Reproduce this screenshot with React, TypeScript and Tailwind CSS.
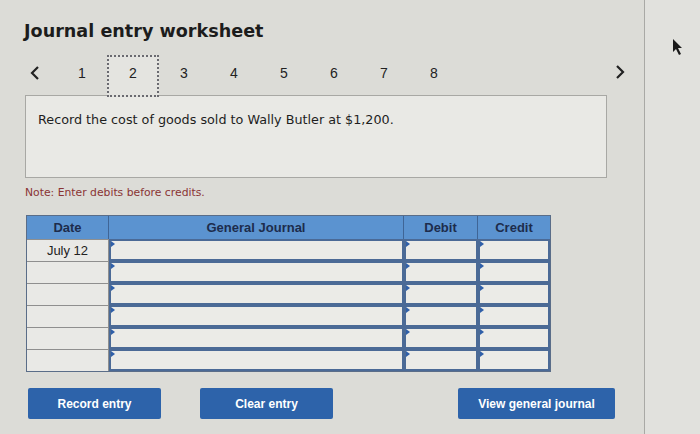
import React from 'react';

const steps = [1, 2, 3, 4, 5, 6, 7, 8];
const rows = ['July 12', '', '', '', '', ''];

function InputCell() {
  return (
    <div className="relative h-full border-2 border-[#4b6a96] bg-[#ebebe7]">
      <span className="absolute left-0 top-0 h-0 w-0 border-y-[3px] border-l-[4px] border-y-transparent border-l-[#2f5fa8]" />
    </div>
  );
}

export default function App() {
  return (
    <div className="flex h-[434px] w-[700px] overflow-hidden bg-[#dcdcd7]">
      <div className="flex w-[645px] flex-col border-r border-[#a9a9a5] pl-[24px] pt-[20px]" style={{ fontFamily: '"DejaVu Sans", Verdana, sans-serif' }}>
        <h1 className="text-[17.6px] font-bold leading-[22px] text-[#1c1c1c]">Journal entry worksheet</h1>

        <div className="relative z-10 mt-[13px] flex h-[42px] items-center" style={{ fontFamily: '"Liberation Sans", Arial, sans-serif' }}>
          <svg width="14" height="18" viewBox="0 0 14 18" className="mb-[6px] ml-[4px]">
            <path d="M10 3 L4 9 L10 15" fill="none" stroke="#222" strokeWidth="2.2" />
          </svg>
          <div className="ml-[15px] flex">
            {steps.map((s) => (
              <div
                key={s}
                className={
                  s === 2
                    ? 'flex h-[42px] w-[52px] items-center justify-center border-2 border-dotted border-[#6a6a70] bg-[#e4e4e0] pb-[6px] text-[14px] text-[#222]'
                    : 'flex h-[42px] w-[50px] items-center justify-center pb-[6px] text-[14px] text-[#222]'
                }
              >
                {s}
              </div>
            ))}
          </div>
          <svg width="14" height="18" viewBox="0 0 14 18" className="mb-[8px] ml-[154px]">
            <path d="M4 3 L10 9 L4 15" fill="none" stroke="#222" strokeWidth="2.2" />
          </svg>
        </div>

        <div className="-mt-[2px] ml-[1px] h-[83px] w-[582px] border border-[#a8a8a4] bg-[#e9e9e5] pl-[12px] pt-[15px]">
          <p className="text-[12.75px] leading-[18px] text-[#1e1e1e]">Record the cost of goods sold to Wally Butler at $1,200.</p>
        </div>

        <p className="ml-[1px] mt-[8px] text-[10.8px] leading-[14px] text-[#8a3434]">Note: Enter debits before credits.</p>

        <div className="ml-[2px] mt-[15px] w-[525px] border border-[#5a6d88]" style={{ fontFamily: '"Liberation Sans", Arial, sans-serif' }}>
          <div className="grid h-[23px] grid-cols-[82px_295px_74px_72px] bg-[#5b93d0] text-[13px] font-bold text-[#1d2c4c]">
            <div className="flex items-center justify-center border-r border-[#3f6596]">Date</div>
            <div className="flex items-center justify-center border-r border-[#3f6596]">General Journal</div>
            <div className="flex items-center justify-center border-r border-[#3f6596]">Debit</div>
            <div className="flex items-center justify-center">Credit</div>
          </div>
          {rows.map((d, i) => (
            <div key={i} className="grid h-[22px] grid-cols-[82px_295px_74px_72px]">
              <div className="flex items-center justify-center border-r border-t border-[#8f8f8f] bg-[#e9e9e6] text-[13px] text-[#222]">{d}</div>
              <InputCell />
              <InputCell />
              <InputCell />
            </div>
          ))}
        </div>

        <div className="mt-[16px] flex" style={{ fontFamily: '"Liberation Sans", Arial, sans-serif' }}>
          <button className="ml-[4px] h-[31px] w-[133px] rounded-[2px] bg-[#2d63aa] text-[12px] font-bold text-white">Record entry</button>
          <button className="ml-[39px] h-[31px] w-[133px] rounded-[2px] bg-[#2d63aa] text-[12px] font-bold text-white">Clear entry</button>
          <button className="ml-[125px] h-[31px] w-[157px] rounded-[2px] bg-[#2d63aa] text-[12px] font-bold text-white">View general journal</button>
        </div>
      </div>

      <div className="relative flex-1 bg-[#e1e1dd]">
        <svg width="12" height="18" viewBox="0 0 12 18" className="absolute left-[27px] top-[38px]">
          <path d="M1 1 L1 14 L4 11 L7 17 L9 16 L6 10 L10 10 Z" fill="#1a1a1a" />
        </svg>
      </div>
    </div>
  );
}
